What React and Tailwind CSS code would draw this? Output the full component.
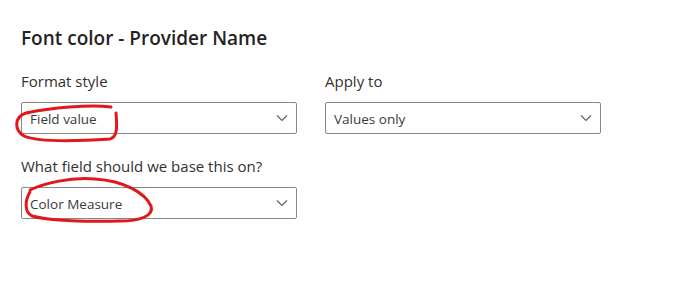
import React from "react";

function Chevron() {
  return (
    <svg width="12" height="8" viewBox="0 0 12 8" fill="none">
      <path d="M1 1.5 L6 6.5 L11 1.5" stroke="#605e5c" strokeWidth="1.1" />
    </svg>
  );
}

function Dropdown({ value }) {
  return (
    <div className="flex h-[32px] w-[276px] items-center justify-between rounded-[2px] border border-[#8a8886] bg-white pl-[8px] pr-[8px]">
      <span className="pt-[3px] text-[13.5px] text-[#3b3a39]">{value}</span>
      <Chevron />
    </div>
  );
}

export default function App() {
  return (
    <div
      className="relative h-[299px] w-[676px] bg-white text-[#252423]"
      style={{ fontFamily: '"Open Sans", "Noto Sans", sans-serif' }}
    >
      <div className="px-[21px] pt-[25px]">
        <h2 className="text-[19px] font-semibold leading-[26px]">Font color - Provider Name</h2>
        <div className="mt-[20px] flex gap-[28px]">
          <div>
            <div className="text-[15px] leading-[20px] text-[#323130]">Format style</div>
            <div className="mt-[11px]">
              <Dropdown value="Field value" />
            </div>
          </div>
          <div>
            <div className="text-[15px] leading-[20px] text-[#323130]">Apply to</div>
            <div className="mt-[11px]">
              <Dropdown value="Values only" />
            </div>
          </div>
        </div>
        <div className="mt-[22px] text-[15px] leading-[20px] text-[#323130]">What field should we base this on?</div>
        <div className="mt-[11px]">
          <Dropdown value="Color Measure" />
        </div>
      </div>

      {/* red annotation marks */}
      <svg className="pointer-events-none absolute left-0 top-0" width="676" height="299" fill="none">
        <path
          d="M111 107 C90 104 50 108 26 113 C14 117 14 130 24 136 C40 143 80 141 110 139 C118 137 117 125 116 113"
          stroke="#e3161b"
          strokeWidth="3"
          strokeLinecap="round"
        />
        <path
          d="M30 190 C45 183 70 177 95 179 C125 181 145 193 151 206 C154 216 140 221 120 221 C90 222 50 221 32 216 C24 212 25 200 30 192"
          stroke="#e3161b"
          strokeWidth="3"
          strokeLinecap="round"
        />
      </svg>
    </div>
  );
}
